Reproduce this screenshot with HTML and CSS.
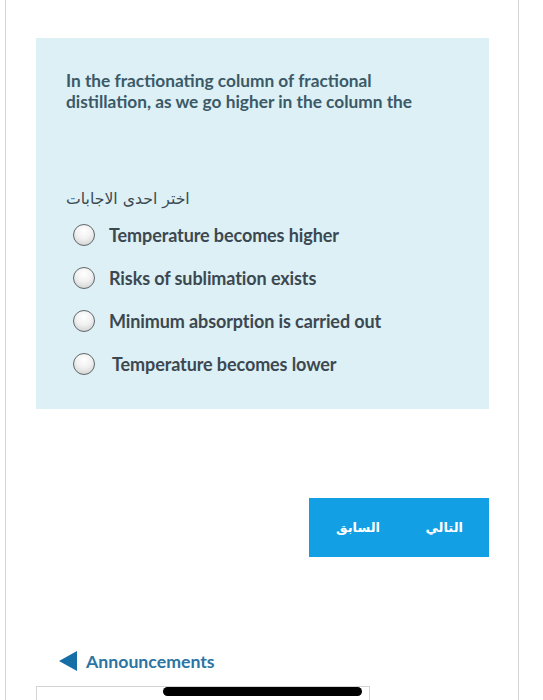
FILE: index.html
```html
<!DOCTYPE html>
<html lang="en">
<head>
<meta charset="utf-8">
<link rel="stylesheet" href="styles.css">
</head>
<body>
<div class="card">
  <div class="question">
    <p class="qtext">In the fractionating column of fractional distillation, as we go higher in the column the</p>
    <p class="prompt"><span dir="rtl">اختر احدى الاجابات</span></p>
    <ul class="options">
      <li><span class="radio"></span><span class="opt">Temperature becomes higher</span></li>
      <li><span class="radio"></span><span class="opt">Risks of sublimation exists</span></li>
      <li><span class="radio"></span><span class="opt">Minimum absorption is carried out</span></li>
      <li><span class="radio"></span><span class="opt extra">Temperature becomes lower</span></li>
    </ul>
  </div>
  <div class="nav-row">
    <div class="nav-btn" dir="rtl">
      <span class="next">التالي</span>
      <span class="prev">السابق</span>
    </div>
  </div>
  <div class="announce">
    <span class="tri"></span>
    <span class="announce-text">Announcements</span>
  </div>
  <div class="bottom-box"></div>
</div>
<div class="home-indicator"></div>
</body>
</html>
```
FILE: styles.css
```css
html, body {
  margin: 0;
  padding: 0;
  background: #ffffff;
  height: 700px;
  overflow: hidden;
}
body {
  font-family: Lato, "Open Sans", "DejaVu Sans", sans-serif;
  position: relative;
}
.card {
  margin-left: 5px;
  width: 514px;
  height: 700px;
  border-left: 1px solid #d6d6d6;
  border-right: 1px solid #d6d6d6;
  padding: 38px 29px 0 30px;
  box-sizing: border-box;
}
.question {
  background: #dcf0f6;
  height: 371px;
  padding: 32px 30px 0 30px;
  box-sizing: border-box;
}
.qtext {
  margin: 0;
  font-size: 17.3px;
  font-weight: 700;
  line-height: 21px;
  color: #3b5966;
  width: 380px;
}
.prompt {
  margin: 76px 0 0 0;
  font-family: "DejaVu Sans", sans-serif;
  font-size: 15.7px;
  color: #3c4a52;
  line-height: 22px;
}
.options {
  list-style: none;
  margin: 3px 0 0 0;
  padding: 0;
}
.options li {
  display: flex;
  align-items: center;
  height: 43px;
  padding-left: 7px;
}
.radio {
  width: 20px;
  height: 20px;
  border-radius: 50%;
  border: 1px solid #5f666b;
  background: radial-gradient(circle at 50% 30%, #ffffff 0%, #f1f1f1 45%, #c9c9c9 100%);
  flex: none;
}
.opt {
  margin-left: 14px;
  font-size: 18px;
  font-weight: 700;
  color: #3c4850;
  letter-spacing: -0.1px;
}
.opt.extra {
  margin-left: 17px;
}
.nav-row {
  display: flex;
  justify-content: flex-end;
  margin-top: 89px;
}
.nav-btn {
  width: 180px;
  height: 59px;
  background: #139fe4;
  display: flex;
  align-items: center;
  box-sizing: border-box;
  padding: 0 26px 0 27px;
  justify-content: space-between;
  font-family: "DejaVu Sans", sans-serif;
  font-size: 13px;
  font-weight: 700;
  color: #ffffff;
}
.announce {
  display: flex;
  align-items: center;
  margin-top: 92px;
  margin-left: 23px;
}
.tri {
  width: 0;
  height: 0;
  border-top: 10px solid transparent;
  border-bottom: 10px solid transparent;
  border-right: 18px solid #156fa6;
}
.announce-text {
  margin-left: 9px;
  font-size: 17.7px;
  font-weight: 700;
  color: #2a75a3;
  line-height: 22px;
  margin-top: 2px;
}
.bottom-box {
  margin-top: 13px;
  width: 334px;
  height: 20px;
  border: 1px solid #d4d4d4;
  box-sizing: border-box;
}
.home-indicator {
  position: absolute;
  left: 163px;
  top: 687px;
  width: 199px;
  height: 9px;
  border-radius: 5px;
  background: #000000;
}
```
